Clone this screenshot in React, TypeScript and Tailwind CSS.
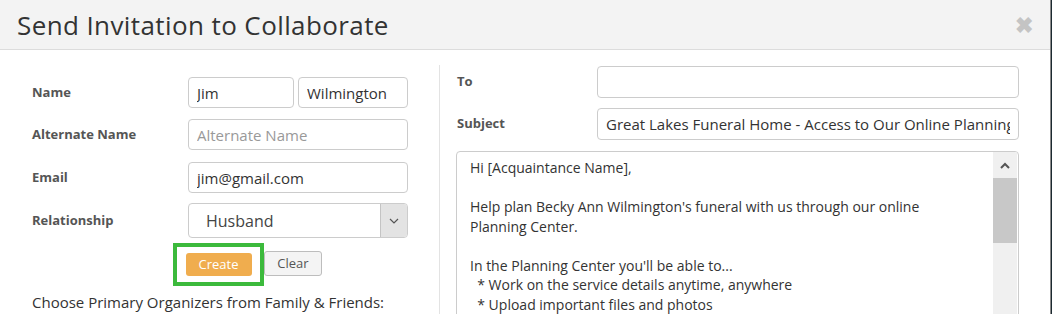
import React from 'react';

const font = { fontFamily: '"Open Sans", "Liberation Sans", sans-serif' };

const inputCls =
  'h-[31px] border border-[#cccccc] rounded-[4px] px-2 text-[15px] text-[#333] bg-white outline-none';

const Label: React.FC<{ children: React.ReactNode; w: string }> = ({ children, w }) => (
  <div className={`${w} shrink-0 text-[13px] font-bold text-[#555]`}>{children}</div>
);

const bodyLines = [
  'Hi [Acquaintance Name],',
  '',
  "Help plan Becky Ann Wilmington's funeral with us through our online",
  'Planning Center.',
  '',
  "In the Planning Center you'll be able to...",
  '  * Work on the service details anytime, anywhere',
  '  * Upload important files and photos',
];

const App: React.FC = () => {
  return (
    <div className="w-[1052px] h-[314px] overflow-hidden bg-[#1c2a31]" style={font}>
      <div className="w-[1051px] h-[314px] bg-white border-r border-[#8a8a8a] flex flex-col">
        {/* header */}
        <div className="h-[50px] shrink-0 bg-[#f3f3f3] border-b border-[#dcdcdc] flex items-center justify-between pl-[17px] pr-[17px]">
          <h3 className="text-[26px] text-[#333] leading-none tracking-[0.4px]">Send Invitation to Collaborate</h3>
          <span className="text-[22px] font-bold text-[#c4c4c4] leading-none mt-[-2px]">✖</span>
        </div>

        <div className="flex flex-1 min-h-0">
          {/* left column */}
          <div className="w-[439px] shrink-0 pl-[32px] pt-[27px]">
            <div className="flex flex-col">
              <div className="flex items-center">
                <Label w="w-[156px]">Name</Label>
                <input readOnly value="Jim" className={`${inputCls} w-[106px]`} />
                <input readOnly value="Wilmington" className={`${inputCls} w-[110px] ml-[4px]`} />
              </div>
              <div className="flex items-center mt-[11px]">
                <Label w="w-[156px]">Alternate Name</Label>
                <input readOnly placeholder="Alternate Name" className={`${inputCls} w-[220px] placeholder:text-[#999]`} />
              </div>
              <div className="flex items-center mt-[12px]">
                <Label w="w-[156px]">Email</Label>
                <input readOnly value="jim@gmail.com" className={`${inputCls} w-[220px]`} />
              </div>
              <div className="flex items-center mt-[10px]">
                <Label w="w-[156px]">Relationship</Label>
                <div className="w-[220px] h-[35px] border border-[#cccccc] rounded-[4px] flex overflow-hidden">
                  <div className="flex-1 flex items-center pl-[17px] text-[16px] text-[#444]">Husband</div>
                  <div className="w-[27px] bg-[#e3e3e3] border-l border-[#c4c4c4] flex items-center justify-center">
                    <svg width="10" height="6" viewBox="0 0 10 6" fill="none">
                      <path d="M1 1l4 4 4-4" stroke="#555" strokeWidth="1.2" />
                    </svg>
                  </div>
                </div>
              </div>
            </div>

            <div className="flex items-start mt-[5px] ml-[141px]">
              <div className="border-[4px] border-[#3cba3c] w-[91px] h-[43px] flex items-center justify-center">
                <button className="w-[66px] h-[23px] rounded-[3px] bg-[#f0ad4e] text-white text-[13px]">Create</button>
              </div>
              <button className="mt-[8px] w-[58px] h-[25px] rounded-[3px] border border-[#bdbdbd] bg-[#f4f4f4] text-[#555] text-[13px]">
                Clear
              </button>
            </div>

            <div className="mt-[5px] text-[15px] text-[#333]">Choose Primary Organizers from Family &amp; Friends:</div>
          </div>

          {/* right column */}
          <div className="flex-1 mt-[15px] border-l border-[#e3e3e3] pl-[16px] pr-[31px] pt-[1px]">
            <div className="flex flex-col gap-[10px]">
              <div className="flex items-center">
                <Label w="w-[141px] pl-[1px]">To</Label>
                <input readOnly className={`${inputCls} flex-1 min-w-0 h-[32px]`} />
              </div>
              <div className="flex items-center">
                <Label w="w-[141px] pl-[1px]">Subject</Label>
                <input
                  readOnly
                  value="Great Lakes Funeral Home - Access to Our Online Planning Center"
                  className={`${inputCls} flex-1 min-w-0 h-[32px]`}
                />
              </div>
            </div>

            <div className="mt-[11px] h-[200px] border border-[#cccccc] rounded-[4px] flex overflow-hidden">
              <div className="flex-1 pl-[13px] pt-[6px] text-[14px] leading-[19.5px] text-[#333] whitespace-pre">
                {bodyLines.map((l, i) => (
                  <div key={i} className="h-[19.5px]">{l}</div>
                ))}
              </div>
              <div className="w-[24px] mr-[1px] bg-[#f0f0f0] flex flex-col items-center">
                <div className="h-[26px] flex items-center justify-center">
                  <svg width="10" height="7" viewBox="0 0 10 7">
                    <path d="M1 6l4-4 4 4" stroke="#555" strokeWidth="2" fill="none" />
                  </svg>
                </div>
                <div className="w-full h-[65px] bg-[#c8c8c8]" />
              </div>
            </div>
          </div>
        </div>
      </div>
    </div>
  );
};

export default App;
